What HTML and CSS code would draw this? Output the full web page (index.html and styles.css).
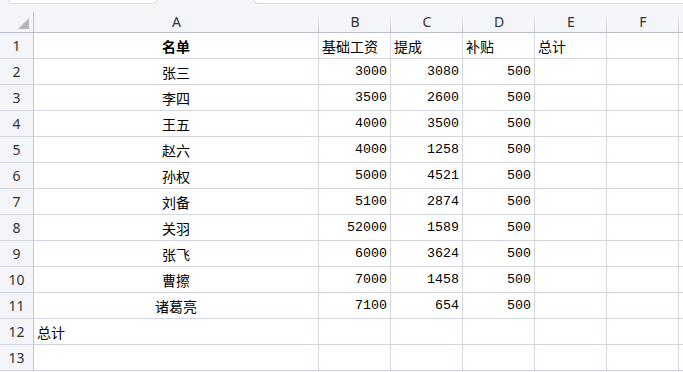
FILE: index.html
```html
<!DOCTYPE html>
<html lang="zh-CN">
<head>
  <meta charset="UTF-8">
  <title>工资表</title>
  <link rel="stylesheet" href="styles.css">
</head>
<body>
  <div class="top-strip">
    <div class="tab-box name-box"></div>
    <div class="tab-box formula-box"></div>
  </div>

  <div class="sheet">
    <!-- column headers -->
    <div class="corner"><span class="corner-mark"></span></div>
    <div class="col-head">A</div>
    <div class="col-head">B</div>
    <div class="col-head">C</div>
    <div class="col-head">D</div>
    <div class="col-head">E</div>
    <div class="col-head">F</div>
    <div class="col-head rest"></div>

    <div class="row-head">1</div>
    <div class="cell center bold">名单</div>
    <div class="cell">基础工资</div>
    <div class="cell">提成</div>
    <div class="cell">补贴</div>
    <div class="cell">总计</div>
    <div class="cell"></div>
    <div class="cell rest"></div>

    <div class="row-head">2</div>
    <div class="cell center">张三</div>
    <div class="cell num">3000</div>
    <div class="cell num">3080</div>
    <div class="cell num">500</div>
    <div class="cell"></div>
    <div class="cell"></div>
    <div class="cell rest"></div>

    <div class="row-head">3</div>
    <div class="cell center">李四</div>
    <div class="cell num">3500</div>
    <div class="cell num">2600</div>
    <div class="cell num">500</div>
    <div class="cell"></div>
    <div class="cell"></div>
    <div class="cell rest"></div>

    <div class="row-head">4</div>
    <div class="cell center">王五</div>
    <div class="cell num">4000</div>
    <div class="cell num">3500</div>
    <div class="cell num">500</div>
    <div class="cell"></div>
    <div class="cell"></div>
    <div class="cell rest"></div>

    <div class="row-head">5</div>
    <div class="cell center">赵六</div>
    <div class="cell num">4000</div>
    <div class="cell num">1258</div>
    <div class="cell num">500</div>
    <div class="cell"></div>
    <div class="cell"></div>
    <div class="cell rest"></div>

    <div class="row-head">6</div>
    <div class="cell center">孙权</div>
    <div class="cell num">5000</div>
    <div class="cell num">4521</div>
    <div class="cell num">500</div>
    <div class="cell"></div>
    <div class="cell"></div>
    <div class="cell rest"></div>

    <div class="row-head">7</div>
    <div class="cell center">刘备</div>
    <div class="cell num">5100</div>
    <div class="cell num">2874</div>
    <div class="cell num">500</div>
    <div class="cell"></div>
    <div class="cell"></div>
    <div class="cell rest"></div>

    <div class="row-head">8</div>
    <div class="cell center">关羽</div>
    <div class="cell num">52000</div>
    <div class="cell num">1589</div>
    <div class="cell num">500</div>
    <div class="cell"></div>
    <div class="cell"></div>
    <div class="cell rest"></div>

    <div class="row-head">9</div>
    <div class="cell center">张飞</div>
    <div class="cell num">6000</div>
    <div class="cell num">3624</div>
    <div class="cell num">500</div>
    <div class="cell"></div>
    <div class="cell"></div>
    <div class="cell rest"></div>

    <div class="row-head">10</div>
    <div class="cell center">曹擦</div>
    <div class="cell num">7000</div>
    <div class="cell num">1458</div>
    <div class="cell num">500</div>
    <div class="cell"></div>
    <div class="cell"></div>
    <div class="cell rest"></div>

    <div class="row-head">11</div>
    <div class="cell center">诸葛亮</div>
    <div class="cell num">7100</div>
    <div class="cell num">654</div>
    <div class="cell num">500</div>
    <div class="cell"></div>
    <div class="cell"></div>
    <div class="cell rest"></div>

    <div class="row-head">12</div>
    <div class="cell">总计</div>
    <div class="cell"></div>
    <div class="cell"></div>
    <div class="cell"></div>
    <div class="cell"></div>
    <div class="cell"></div>
    <div class="cell rest"></div>

    <div class="row-head">13</div>
    <div class="cell"></div>
    <div class="cell"></div>
    <div class="cell"></div>
    <div class="cell"></div>
    <div class="cell"></div>
    <div class="cell"></div>
    <div class="cell rest"></div>
  </div>
</body>
</html>
```

FILE: styles.css
```css
/* Page base */
body {
  margin: 0;
  background-color: #f4f5f8;
  font-family: "Noto Sans CJK SC", sans-serif;
  color: #000;
  overflow: hidden;
}

/* Strip above the grid (name box / formula bar edges) */
.top-strip {
  display: flex;
  height: 12px;
}

.tab-box {
  height: 3px;
  background-color: #fff;
  border: 1px solid #d6d9df;
  border-top: none;
  border-radius: 0 0 4px 4px;
}

.name-box {
  margin-left: 8px;
  width: 147px;
}

.formula-box {
  margin-left: 97px;
  flex: 1;
  margin-right: -6px;
}

/* Grid: row numbers, A (wide), B-F, then the rest of the window */
.sheet {
  display: grid;
  grid-template-columns: 34px 285px repeat(5, 72px) 1fr;
  grid-template-rows: 21px repeat(13, 26px);
}

.corner,
.col-head {
  box-sizing: border-box;
  border-bottom: 1px solid #b9bdc8;
  background-color: #f4f5f8;
}

.corner {
  display: flex;
  justify-content: flex-end;
  align-items: flex-end;
  padding: 0 4px 3px 0;
  border-right: 1px solid #c0c4cf;
}

.corner-mark {
  width: 11px;
  height: 11px;
  background-color: #b3b6bc;
  clip-path: polygon(100% 0, 100% 100%, 0 100%);
}

.col-head {
  display: flex;
  align-items: center;
  justify-content: center;
  padding-bottom: 2px;
  font-family: "Noto Sans", sans-serif;
  font-size: 14px;
  color: #333;
  background-image: linear-gradient(to bottom, rgba(196, 200, 210, 0), #c4c8d2);
  background-size: 1px 100%;
  background-position: right top;
  background-repeat: no-repeat;
}

.col-head.rest {
  background-image: none;
}

.row-head {
  box-sizing: border-box;
  display: flex;
  align-items: center;
  justify-content: center;
  background-color: #f4f5f8;
  border-right: 1px solid #c0c4cf;
  border-bottom: 1px solid #d3d6df;
  font-family: "Noto Sans", sans-serif;
  font-size: 14px;
  color: #333;
}

.cell {
  box-sizing: border-box;
  display: flex;
  align-items: center;
  padding: 0 3px;
  background-color: #fff;
  border-right: 1px solid #d3d6df;
  border-bottom: 1px solid #d3d6df;
  font-size: 14px;
  white-space: nowrap;
}

.cell.center {
  justify-content: center;
}

.cell.bold {
  font-weight: bold;
}

.cell.num {
  justify-content: flex-end;
  font-family: "Liberation Mono", monospace;
  font-size: 13.3px;
}

.cell.rest {
  border-right: none;
}
```
